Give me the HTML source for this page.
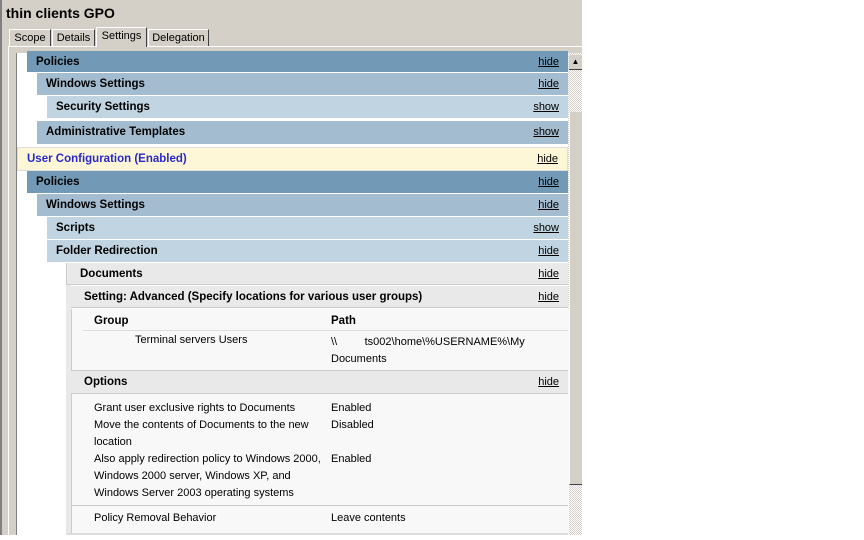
<!DOCTYPE html><html><head><style>
body{margin:0;width:864px;height:540px;background:#fff;position:relative;overflow:hidden;font-family:"Liberation Sans",sans-serif;font-size:11px;color:#000}
.a{position:absolute}
.r{position:absolute;right:296px;height:22px;line-height:22px;font-weight:bold;font-size:11.5px;padding-left:9px;box-sizing:border-box}
.r u{position:absolute;right:9px;font-weight:normal;font-size:11px}
.d{background:#7299b6}.m{background:#a3bcd0}.l{background:#c1d4e1}.g{background:#e9e9e9;border-bottom:1px solid #ccc}
.t{position:absolute;font-size:11px}
</style></head><body>
<div class="a" style="left:0;top:0;width:582px;height:535px;background:#d4d0c8;border-left:2px solid #808080;box-sizing:border-box"></div>
<div class="a" style="left:6px;top:5px;font-weight:bold;font-size:14px">thin clients GPO</div>
<div class="a" style="left:9px;top:29px;width:42px;height:17px;border:1px solid #fff;border-right-color:#404040;border-bottom:none;box-sizing:border-box;line-height:16px;text-align:center">Scope</div>
<div class="a" style="left:52px;top:29px;width:43px;height:17px;border:1px solid #fff;border-right-color:#404040;border-bottom:none;box-sizing:border-box;line-height:16px;text-align:center">Details</div>
<div class="a" style="left:96px;top:27px;width:51px;height:20px;border:1px solid #fff;border-right-color:#404040;border-bottom:none;box-sizing:border-box;line-height:16px;text-align:center;background:#d4d0c8;z-index:2">Settings</div>
<div class="a" style="left:148px;top:29px;width:61px;height:17px;border:1px solid #fff;border-right-color:#404040;border-bottom:none;box-sizing:border-box;line-height:16px;text-align:center">Delegation</div>
<div class="a" style="left:8px;top:46px;width:573px;height:489px;border-top:1px solid #fff;border-left:1px solid #fff"></div>
<div class="a" style="left:16px;top:53px;width:552px;height:482px;background:#fff;border-left:1px solid #808080"></div>
<div class="a" style="left:568px;top:53px;width:14px;height:482px;background:repeating-conic-gradient(#d4d0c8 0 25%,#fff 0 50%) 0 0/2px 2px"></div>
<div class="a" style="left:569px;top:55px;width:13px;height:15px;background:#d4d0c8;border-bottom:1px solid #404040;box-sizing:border-box;text-align:center;font-size:8px;line-height:14px">▲</div>
<div class="a" style="left:569px;top:112px;width:13px;height:373px;background:#d4d0c8;border-left:1px solid #fff;border-bottom:1px solid #404040;box-sizing:border-box"></div>
<div class="r d" style="left:27px;top:51px;height:21px">Policies<u>hide</u></div>
<div class="r m" style="left:37px;top:73px">Windows Settings<u>hide</u></div>
<div class="r l" style="left:47px;top:96px">Security Settings<u>show</u></div>
<div class="r m" style="left:37px;top:121px;height:23px">Administrative Templates<u>show</u></div>
<div class="r" style="left:17px;top:147px;height:24px;background:#fdf7d8;border:1px solid #ddd;color:#2929c8;line-height:22px">User Configuration (Enabled)<u style="color:#000">hide</u></div>
<div class="r d" style="left:27px;top:171px">Policies<u>hide</u></div>
<div class="r m" style="left:37px;top:194px">Windows Settings<u>hide</u></div>
<div class="r l" style="left:47px;top:217px">Scripts<u>show</u></div>
<div class="r l" style="left:47px;top:240px">Folder Redirection<u>hide</u></div>
<div class="r g" style="left:66px;top:263px;padding-left:13px;border-left:1px solid #ccc">Documents<u>hide</u></div>
<div class="a" style="left:66px;top:285px;width:5px;height:250px;background:#e9e9e9"></div>
<div class="r g" style="left:71px;top:286px;padding-left:13px">Setting: Advanced (Specify locations for various user groups)<u>hide</u></div>
<div class="a" style="left:71px;top:309px;width:497px;height:226px;background:#f8f8f8;border-left:1px solid #ccc"></div>
<div class="t" style="left:94px;top:315px;font-weight:bold;font-size:11.5px">Group</div>
<div class="t" style="left:331px;top:315px;font-weight:bold;font-size:11.5px">Path</div>
<div class="a" style="left:83px;top:330px;width:485px;height:1px;background:#ddd"></div>
<div class="t" style="left:135px;top:334px">Terminal servers Users</div>
<div class="t" style="left:331px;top:334px;line-height:17px;width:220px">\\ &nbsp; &nbsp; &nbsp; &nbsp; ts002\home\%USERNAME%\My<br>Documents</div>
<div class="r g" style="left:71px;top:370px;padding-left:13px;border-top:1px solid #ccc;height:24px">Options<u>hide</u></div>
<div class="t" style="left:94px;top:400px;line-height:17px;width:230px">Grant user exclusive rights to Documents<br>Move the contents of Documents to the new<br>location<br>Also apply redirection policy to Windows 2000,<br>Windows 2000 server, Windows XP, and<br>Windows Server 2003 operating systems</div>
<div class="t" style="left:331px;top:400px;line-height:17px">Enabled<br>Disabled<br><br>Enabled</div>
<div class="a" style="left:71px;top:505px;width:497px;height:1px;background:#ccc"></div>
<div class="t" style="left:94px;top:512px">Policy Removal Behavior</div>
<div class="t" style="left:331px;top:512px">Leave contents</div>
<div class="a" style="left:66px;top:533px;width:502px;height:2px;background:#ddd"></div>
</body></html>
